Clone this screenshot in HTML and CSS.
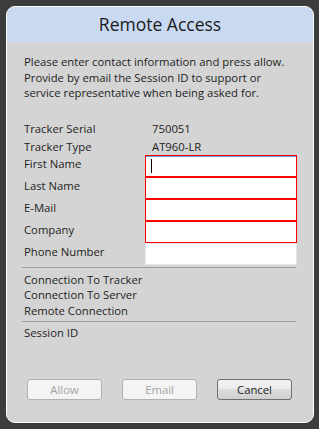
FILE: index.html
```html
<!DOCTYPE html>
<html lang="en">
<head>
  <meta charset="UTF-8" />
  <title>Remote Access</title>
  <link rel="stylesheet" href="styles.css">
</head>
<body>

  <div class="dialog">
    <div class="dialog-title">Remote Access</div>

    <div class="dialog-body">
      <p class="intro">Please enter contact information and press allow. Provide by email the Session ID to support or service representative when being asked for.</p>

      <div class="info-row"><span class="label">Tracker Serial</span><span class="value">750051</span></div>
      <div class="info-row short"><span class="label">Tracker Type</span><span class="value">AT960-LR</span></div>

      <div class="field-row">
        <span class="label">First Name</span>
        <span class="field-wrap"><input class="field required focused" type="text"><span class="caret"></span></span>
      </div>
      <div class="field-row"><span class="label">Last Name</span><input class="field required" type="text"></div>
      <div class="field-row"><span class="label">E-Mail</span><input class="field required" type="text"></div>
      <div class="field-row"><span class="label">Company</span><input class="field required" type="text"></div>
      <div class="field-row"><span class="label">Phone Number</span><input class="field" type="text"></div>

      <hr class="sep">

      <div class="status-list">
        <div>Connection To Tracker</div>
        <div>Connection To Server</div>
        <div>Remote Connection</div>
      </div>

      <hr class="sep">

      <div class="session">Session ID</div>

      <div class="buttons">
        <button disabled>Allow</button>
        <button disabled>Email</button>
        <button>Cancel</button>
      </div>
    </div>
  </div>

</body>
</html>
```

FILE: styles.css
```css
body {
  margin: 0;
  background: #3c3c3c;
  font-family: 'Open Sans', 'Noto Sans', sans-serif;
  font-size: 11.3px;
  color: #1e1e1e;
}

.dialog {
  margin: 6px 0 0 6px;
  width: 306px;
  height: 415px;
  border: 1px solid #fff;
  border-radius: 9px;
  overflow: hidden;
  background: #d4d4d4;
  display: flex;
  flex-direction: column;
}

.dialog-title {
  height: 35px;
  line-height: 35px;
  background: #c8d9f1;
  text-align: center;
  font-size: 17.5px;
  color: #1a1a1a;
}

.dialog-body {
  flex: 1;
  display: flex;
  flex-direction: column;
  padding: 0 16px 22px 15px;
}

.intro {
  margin: 12px 2px 19px 2px;
  line-height: 15.5px;
}

.info-row, .field-row {
  display: flex;
  line-height: 18px;
}

.info-row { height: 18px; }
.info-row.short { height: 17px; }

.label {
  width: 123px;
  padding-left: 2px;
}

.value {
  padding-left: 5px;
}

.field-row { height: 22px; }

.field-wrap {
  position: relative;
  display: flex;
}

.field {
  box-sizing: border-box;
  width: 152px;
  height: 22px;
  margin: 0;
  padding: 0 4px;
  border: 1px solid #e2e6ee;
  background: #fff;
  font: inherit;
  outline: none;
}

.field.required {
  border-color: #ff0000;
}

.field.focused {
  box-shadow: inset 0 1px 0 #6f9bd1;
}

.caret {
  position: absolute;
  left: 6px;
  top: 4px;
  width: 1px;
  height: 14px;
  background: #000;
}

.sep {
  margin: 2px 1px 0 0;
  border: none;
  border-top: 1px solid #a0a0a0;
}

.status-list {
  padding: 4px 2px 1px;
  line-height: 15.5px;
}

.session {
  padding: 3px 2px 0;
  line-height: 15.5px;
}

.buttons {
  margin-top: auto;
  display: flex;
  gap: 20px;
  padding-left: 5px;
}

button {
  width: 75px;
  height: 21px;
  padding: 0;
  font: inherit;
  color: #1e1e1e;
  border: 1px solid #707070;
  border-radius: 3px;
  background: linear-gradient(#f2f2f2, #ebebeb 50%, #dddddd 50%, #cfcfcf);
}

button:disabled {
  color: #a3a3a3;
  border-color: #adb2b5;
  background: #f4f4f4;
}
```
